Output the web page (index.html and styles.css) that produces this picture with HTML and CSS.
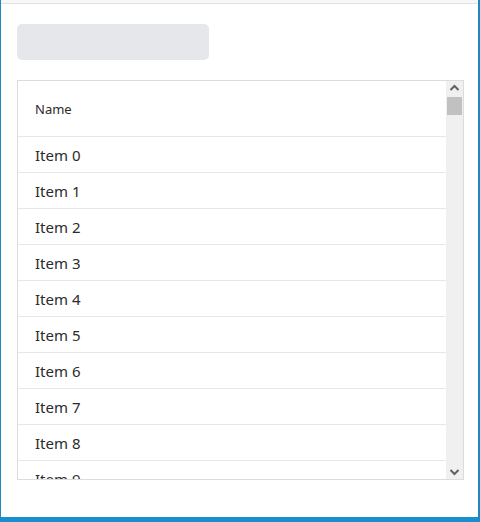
FILE: index.html
```html
<!DOCTYPE html>
<html>
<head>
<meta charset="utf-8">
<link rel="stylesheet" href="styles.css">
</head>
<body>
<div class="frame">
  <div class="topbar"></div>
  <div class="content">
    <div class="skeleton"></div>
    <div class="table">
      <div class="list">
        <div class="head">Name</div>
        <div class="row">Item 0</div>
        <div class="row">Item 1</div>
        <div class="row">Item 2</div>
        <div class="row">Item 3</div>
        <div class="row">Item 4</div>
        <div class="row">Item 5</div>
        <div class="row">Item 6</div>
        <div class="row">Item 7</div>
        <div class="row">Item 8</div>
        <div class="row">Item 9</div>
      </div>
      <div class="scrollbar">
        <svg class="arrow" width="17" height="14" viewBox="0 0 17 14"><path d="M4.5 9 L8.5 5 L12.5 9" fill="none" stroke="#606060" stroke-width="2"/></svg>
        <div class="track"><div class="thumb"></div></div>
        <svg class="arrow" width="17" height="14" viewBox="0 0 17 14"><path d="M4.5 5 L8.5 9 L12.5 5" fill="none" stroke="#606060" stroke-width="2"/></svg>
      </div>
    </div>
  </div>
</div>
</body>
</html>
```

FILE: styles.css
```css
html, body {
  margin: 0;
  padding: 0;
  background: #ffffff;
}
.frame {
  width: 480px;
  height: 522px;
  box-sizing: border-box;
  border-left: 1px solid #2286c0;
  border-right: 2px solid #2286c0;
  border-bottom: 5px solid #1a8fd0;
  display: flex;
  flex-direction: column;
  font-family: "Noto Sans", "Open Sans", sans-serif;
  color: #2b2b2b;
}
.topbar {
  height: 3px;
  background: #f7f7f7;
  border-bottom: 1px solid #e2e2e2;
  flex: none;
}
.content {
  padding: 20px 0 0 16px;
  display: flex;
  flex-direction: column;
}
.skeleton {
  width: 192px;
  height: 36px;
  background: #e5e7eb;
  border-radius: 5px;
}
.table {
  margin-top: 20px;
  width: 447px;
  height: 400px;
  box-sizing: border-box;
  border: 1px solid #dcdcdc;
  display: flex;
  overflow: hidden;
}
.list {
  flex: 1;
  overflow: hidden;
}
.head {
  height: 55px;
  border-bottom: 1px solid #e5e7eb;
  display: flex;
  align-items: center;
  padding-left: 17px;
  font-size: 13px;
}
.row {
  height: 35px;
  border-bottom: 1px solid #e5e7eb;
  display: flex;
  align-items: center;
  padding-left: 17px;
  font-size: 15px;
}
.scrollbar {
  width: 17px;
  background: #f0f0f0;
  display: flex;
  flex-direction: column;
  flex: none;
}
.arrow {
  display: block;
  flex: none;
}
.track {
  flex: 1;
  padding: 2px 1px 0 1px;
}
.thumb {
  height: 18px;
  background: #c1c1c1;
}
```
